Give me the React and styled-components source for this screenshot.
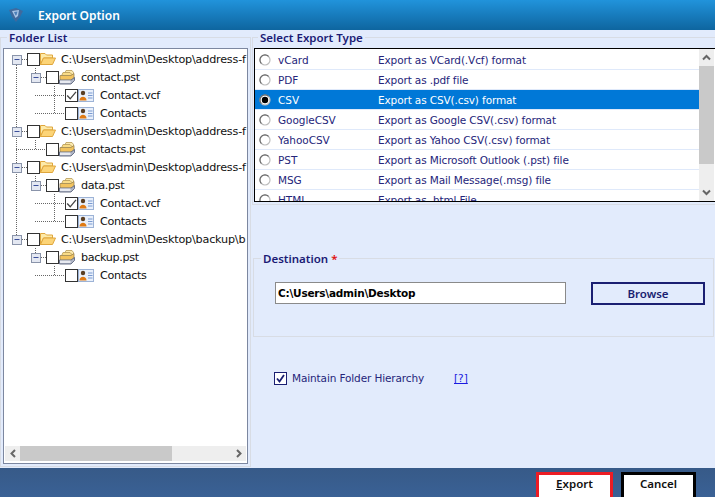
import React from 'react';
import styled, { createGlobalStyle } from 'styled-components';

const Global = createGlobalStyle`
  html, body { margin: 0; padding: 0; background: #e2ebfc; }
  * { box-sizing: border-box; }
`;
const FONT = `"DejaVu Sans", Verdana, sans-serif`;
const HEAD = `"Noto Sans", "DejaVu Sans", sans-serif`;

const Window = styled.div`
  width: 715px; height: 497px; overflow: hidden; display: flex; flex-direction: column;
  background: #e2ebfc; font-family: ${FONT}; font-size: 11px; color: #000;
`;
const TitleBar = styled.header`
  height: 30px; flex: none; display: flex; align-items: center; padding-left: 8px; gap: 14px;
  background: linear-gradient(#2193db, #0e659f);
`;
const TitleText = styled.h1`
  margin: 0; font: 600 12px ${HEAD}; letter-spacing: 0; color: #fff;
`;
const Main = styled.main`
  flex: 1; min-height: 0; display: flex; padding: 1px 0 1px 0;
`;
const Group = styled.fieldset`
  margin: 0; padding: 0; min-width: 0; border: 1px solid #d8dce4; display: flex; flex-direction: column;
`;
const GroupTitle = styled.legend`
  padding: 0 2px; margin-left: ${p => p.$inset}px; font: 600 11.5px/13px ${HEAD}; letter-spacing: 0; color: #1b1b75;
`;
const FolderGroup = styled(Group)`
  width: 251px; flex: none; margin-right: 1px; padding: 4px 2px 2px 2px;
`;
const TreeBox = styled.div`
  flex: 1; min-height: 0; background: #fff; border: 1px solid #7c87a0; display: flex; flex-direction: column;
`;
const TreeList = styled.ul`
  flex: 1; margin: 0; padding: 1px 0 0; list-style: none; overflow: hidden;
`;
const TreeRow = styled.li`
  height: 18px; display: flex; align-items: center; white-space: nowrap;
`;
const TreeCheck = styled.span`
  width: 13px; height: 13px; flex: none; border: 1px solid #333; background: #fff; display: flex; align-items: center; justify-content: center;
`;
const TreeLabel = styled.span`
  margin-left: ${p => p.$gap}px; font-size: 11.2px; letter-spacing: ${p => p.$sp}px; color: #111;
`;
const HScroll = styled.div`
  height: 15px; flex: none; margin: 0 1px 2px 1px; background: #eee; display: flex; align-items: center; justify-content: space-between; padding: 0 3px 0 4px;
`;
const HThumbWrap = styled.div`
  flex: 1; align-self: stretch; margin: 0 0 0 2px; display: flex;
`;
const HThumb = styled.div`
  width: 152px; background: #c9c9c9;
`;
const RightPane = styled.div`
  flex: 1; min-width: 0; display: flex; flex-direction: column;
`;
const TypeGroup = styled(Group)`
  height: 174px; flex: none; margin-right: -1px; padding: 4px 0 1px 1px;
`;
const TypeBox = styled.div`
  height: 154px; display: flex; border-top: 1px solid #000; border-bottom: 1px solid #000; border-left: 1px solid #000; background: #fff; overflow: hidden;
`;
const TypeList = styled.ul`
  flex: 1; margin: 0; padding: 1px 0 0; list-style: none; overflow: hidden;
`;
const TypeRow = styled.li`
  height: 20px; flex: none; display: flex; align-items: center; padding-left: 4px; white-space: nowrap;
  background: ${p => p.$on ? '#0078d7' : '#fff'};
  color: ${p => p.$on ? '#fff' : '#25257a'};
  border-bottom: 1px solid #dfe9fa;
`;
const TypeName = styled.span`
  width: 100px; margin-left: 7px; font-size: 10.5px; letter-spacing: -0.05px;
`;
const TypeDesc = styled.span`
  font-size: 10.5px; letter-spacing: -0.12px;
`;
const VScroll = styled.div`
  width: 15px; flex: none; margin-right: 1px; background: #eee; display: flex; flex-direction: column; align-items: center;
`;
const ArrowSlot = styled.div`
  height: ${p => p.$h}px; flex: none; display: flex; align-items: center; justify-content: center;
`;
const VThumb = styled.div`
  width: 15px; height: 98px; flex: none; background: #c9c9c9;
`;
const VRest = styled.div`
  flex: 1;
`;
const DestGroup = styled(Group)`
  height: 85px; margin: 47px 1px 0 1px; flex: none; flex-direction: row; align-items: flex-start; padding: 17px 0 0 0;
`;
const Star = styled.span`
  color: #e01010; margin-left: 3px;
`;
const PathInput = styled.input`
  width: 291px; height: 22px; margin-left: 21px; border: 1px solid #8a8a8a; background: #fff; padding: 0 2px; font: 600 10.5px ${FONT}; letter-spacing: -0.22px; color: #000; outline: none;
`;
const BrowseButton = styled.button`
  width: 114px; height: 23px; margin-left: 25px; border: 2px solid #1a1f72; background: #e2ebfc; font: 600 11.5px ${HEAD}; color: #1a1f72; padding: 0;
`;
const OptionRow = styled.div`
  display: flex; align-items: center; margin: 33px 0 0 22px; height: 16px;
`;
const OptionLabel = styled.span`
  margin-left: 5px; font-size: 10.5px; letter-spacing: -0.12px; color: #25257a; width: 162px; white-space: nowrap;
`;
const HelpLink = styled.a`
  font-size: 10.5px; color: #1a1ae0; text-decoration: underline;
`;
const Footer = styled.footer`
  height: 29px; flex: none; display: flex; justify-content: flex-end; align-items: flex-start; gap: 8px; padding: 4px 19px 0 0; overflow: hidden;
  background: linear-gradient(#375a88, #3a6195);
`;
const FootButton = styled.button`
  width: ${p => p.$w}px; height: 29px; flex: none; background: #fff; padding: 0 0 7px; border: 3px solid ${p => p.$color};
  font: 600 11.5px ${HEAD}; color: #111;
`;
const Mnemonic = styled.span`
  text-decoration: underline;
`;

const Tick = ({ c = '#444', w = 1.3 }) => (
  <svg width="11" height="11" viewBox="0 0 11 11"><path d="M1.2 5.5 L4.2 8.8 L10 1.8" fill="none" stroke={c} strokeWidth={w} /></svg>
);

const FolderIcon = () => (
  <svg width="16" height="14" viewBox="0 0 16 14" style={{ flex: 'none' }}>
    <path d="M0.5 1.5 H5 L6.5 3 H12.5 V6 H3.5 L0.5 12.5Z" fill="#fdeaa9" stroke="#dfa63c" />
    <path d="M3.5 6 H15.5 L12.5 12.5 H0.5Z" fill="#fcd477" stroke="#dfa63c" />
  </svg>
);
const PstIcon = () => (
  <svg width="16" height="15" viewBox="0 0 16 15" style={{ flex: 'none' }}>
    <path d="M7 .5 H13 L14.5 2.5 V5 H5Z" fill="#fbeab0" stroke="#b79a55" strokeWidth=".8" />
    <path d="M4 2.5 H11 L13.5 5 V7 H2Z" fill="#f9dc87" stroke="#b79a55" strokeWidth=".8" />
    <path d="M1 5.5 H12 L15 3.5 V8.5 L12 11 H1Z" fill="#f2c35e" stroke="#9c8656" strokeWidth=".8" />
    <path d="M.5 10 H12 L15.5 7.5 V10.5 L12 14 H.5Z" fill="#aeb4c4" stroke="#5f6880" strokeWidth=".9" />
    <path d="M1 10.5 H11.5 V13 H1Z" fill="#e8eaf0" />
  </svg>
);
const CardIcon = () => (
  <svg width="16" height="13" viewBox="0 0 16 13" style={{ flex: 'none' }}>
    <rect x=".5" y=".5" width="15" height="12" fill="#e9f0fb" stroke="#9db3d6" />
    <circle cx="5" cy="4" r="2.2" fill="#5a3e22" />
    <path d="M1.5 11.5 C1.5 6.5 8.5 6.5 8.5 11.5Z" fill="#e07a14" />
    <path d="M10 4 H14.5 M10 6.5 H14.5 M10 9 H14.5" stroke="#7a9ad0" strokeWidth="1" />
  </svg>
);

const STEP = 19;
const dash = { stroke: '#666', strokeWidth: 1, strokeDasharray: '1 1', fill: 'none' };
const Guides = ({ level, expander, trunk, down, branch }) => {
  const w = 23 + level * STEP;
  const bx = 12.5 + level * STEP;
  const stub = level === 0 ? 12 : 12 + (level - 1) * STEP;
  return (
    <svg width={w} height="18" viewBox={`0 0 ${w} 18`} style={{ flex: 'none' }}>
      {trunk === 'full' && <path d="M12.5 0 V18" {...dash} />}
      {trunk === 'top' && <path d="M12.5 0 V9" {...dash} />}
      {trunk === 'bottom' && <path d="M12.5 9 V18" {...dash} />}
      {branch && <path d={`M${branch.x} ${branch.from} V${branch.to}`} {...dash} />}
      {down && <path d={`M${down} 14 V18`} {...dash} />}
      {expander ? (
        <>
          <path d={`M${Math.ceil(bx) + 5} 9.5 H${w}`} {...dash} />
          <rect x={bx - 4} y="5.5" width="9" height="9" fill="#e4e8f2" stroke="#8a94aa" />
          <path d={`M${bx - 2} 9.5 H${bx + 3}`} stroke="#3b4f9a" strokeWidth="1" />
        </>
      ) : (
        <path d={`M${stub} 9.5 H${w}`} {...dash} />
      )}
    </svg>
  );
};

const L1 = 31.5, L2 = 50.5;
const treeRows = [
  { level: 0, icon: 'folder', text: 'C:\\Users\\admin\\Desktop\\address-f', expander: true, trunk: 'bottom' },
  { level: 1, icon: 'pst', text: 'contact.pst', expander: true, trunk: 'full', branch: { x: L1, from: 0, to: 5 }, down: L2 },
  { level: 2, icon: 'card', text: 'Contact.vcf', checked: true, trunk: 'full', branch: { x: L2, from: 0, to: 18 } },
  { level: 2, icon: 'card', text: 'Contacts', trunk: 'full', branch: { x: L2, from: 0, to: 9 } },
  { level: 0, icon: 'folder', text: 'C:\\Users\\admin\\Desktop\\address-f', expander: true, trunk: 'full' },
  { level: 1, icon: 'pst', text: 'contacts.pst', trunk: 'full', branch: { x: L1, from: 0, to: 9 } },
  { level: 0, icon: 'folder', text: 'C:\\Users\\admin\\Desktop\\address-f', expander: true, trunk: 'full' },
  { level: 1, icon: 'pst', text: 'data.pst', expander: true, trunk: 'full', branch: { x: L1, from: 0, to: 5 }, down: L2 },
  { level: 2, icon: 'card', text: 'Contact.vcf', checked: true, trunk: 'full', branch: { x: L2, from: 0, to: 18 } },
  { level: 2, icon: 'card', text: 'Contacts', trunk: 'full', branch: { x: L2, from: 0, to: 9 } },
  { level: 0, icon: 'folder', text: 'C:\\Users\\admin\\Desktop\\backup\\b', expander: true, trunk: 'top' },
  { level: 1, icon: 'pst', text: 'backup.pst', expander: true, branch: { x: L1, from: 0, to: 5 }, down: L2 },
  { level: 2, icon: 'card', text: 'Contacts', branch: { x: L2, from: 0, to: 9 } },
];
const icons = { folder: <FolderIcon />, pst: <PstIcon />, card: <CardIcon /> };

const types = [
  ['vCard', 'Export as VCard(.Vcf) format'],
  ['PDF', 'Export as .pdf file'],
  ['CSV', 'Export as CSV(.csv) format', true],
  ['GoogleCSV', 'Export as Google CSV(.csv) format'],
  ['YahooCSV', 'Export as Yahoo CSV(.csv) format'],
  ['PST', 'Export as Microsoft Outlook (.pst) file'],
  ['MSG', 'Export as Mail Message(.msg) file'],
  ['HTML', 'Export as .html File'],
];

const Radio = ({ on }) => (
  <svg width="12" height="12" viewBox="0 0 12 12" style={{ flex: 'none' }}>
    <circle cx="6" cy="6" r="5" fill="#fff" stroke="#bdbdbd" strokeWidth="1.2" />
    <path d="M2.4 9.6 A5 5 0 0 1 9.6 2.4" fill="none" stroke="#666" strokeWidth="1.1" />
    {on && <circle cx="6" cy="6" r="3.2" fill="#000" />}
  </svg>
);
const Chevron = ({ d }) => (
  <svg width="9" height="9" viewBox="0 0 9 9">
    <path d={d} fill="none" stroke="#666" strokeWidth="2" />
  </svg>
);

export default function App() {
  return (
    <Window>
      <Global />
      <TitleBar>
        <svg width="16" height="16" viewBox="0 0 16 16">
          <path d="M1 3 L8 1 L15 4 L12 10 L8 15 L4 10Z" fill="#3f6a9e" />
          <path d="M4 4 L11 3 L10 9 L7.5 11 L6 8Z" fill="#a9c4e6" />
          <path d="M6 5 L9.5 4.5 L8.5 8 L7.5 8.5Z" fill="#4c7fb8" />
        </svg>
        <TitleText>Export Option</TitleText>
      </TitleBar>
      <Main>
        <FolderGroup>
          <GroupTitle $inset={4}>Folder List</GroupTitle>
          <TreeBox>
            <TreeList>
              {treeRows.map((r, i) => (
                <TreeRow key={i}>
                  <Guides {...r} />
                  <TreeCheck>{r.checked && <Tick />}</TreeCheck>
                  {icons[r.icon]}
                  <TreeLabel $gap={r.level === 0 ? 5 : 6} $sp={r.level === 0 ? -0.2 : -0.35}>{r.text}</TreeLabel>
                </TreeRow>
              ))}
            </TreeList>
            <HScroll>
              <Chevron d="M6 1 L2.5 4.5 L6 8" />
              <HThumbWrap><HThumb /></HThumbWrap>
              <Chevron d="M3 1 L6.5 4.5 L3 8" />
            </HScroll>
          </TreeBox>
        </FolderGroup>
        <RightPane>
          <TypeGroup>
            <GroupTitle $inset={4}>Select Export Type</GroupTitle>
            <TypeBox>
              <TypeList>
                {types.map(([name, desc, on]) => (
                  <TypeRow key={name} $on={on}>
                    <Radio on={on} />
                    <TypeName>{name}</TypeName>
                    <TypeDesc>{desc}</TypeDesc>
                  </TypeRow>
                ))}
              </TypeList>
              <VScroll>
                <ArrowSlot $h={17}><Chevron d="M1 6.5 L4.5 3 L8 6.5" /></ArrowSlot>
                <VThumb />
                <VRest />
                <ArrowSlot $h={17}><Chevron d="M1 2.5 L4.5 6 L8 2.5" /></ArrowSlot>
              </VScroll>
            </TypeBox>
          </TypeGroup>
          <DestGroup>
            <GroupTitle $inset={7}>Destination<Star>*</Star></GroupTitle>
            <PathInput readOnly value="C:\Users\admin\Desktop" />
            <BrowseButton>Browse</BrowseButton>
          </DestGroup>
          <OptionRow>
            <svg width="13" height="13" viewBox="0 0 13 13" style={{ flex: 'none' }}>
              <rect x=".5" y=".5" width="12" height="12" fill="#fff" stroke="#1a1f72" />
              <path d="M3 6.5 L5.5 9.5 L10 3" fill="none" stroke="#1a1f72" strokeWidth="1.8" />
            </svg>
            <OptionLabel>Maintain Folder Hierarchy</OptionLabel>
            <HelpLink href="#help">[?]</HelpLink>
          </OptionRow>
        </RightPane>
      </Main>
      <Footer>
        <FootButton $w={77} $color="#ec1c24"><Mnemonic>E</Mnemonic>xport</FootButton>
        <FootButton $w={75} $color="#000">Cancel</FootButton>
      </Footer>
    </Window>
  );
}
